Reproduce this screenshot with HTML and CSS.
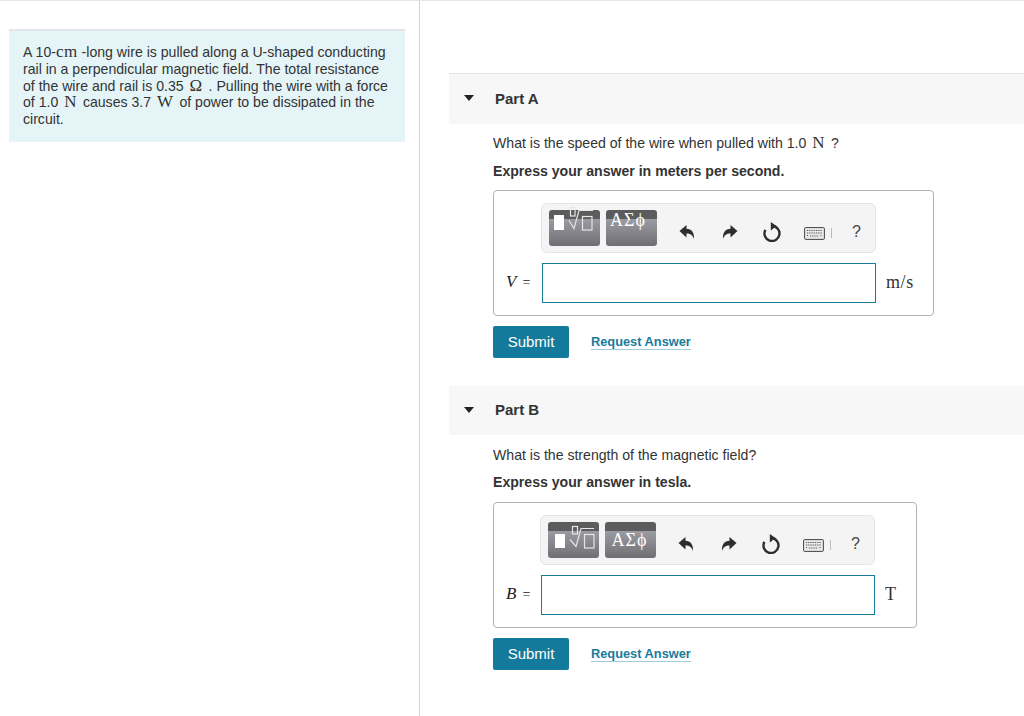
FILE: index.html
```html
<!DOCTYPE html>
<html lang="en">
<head>
  <meta charset="UTF-8">
  <title>Wire on a U-shaped rail</title>
  <link rel="stylesheet" href="styles.css">
</head>
<body>
  <svg class="defs" width="0" height="0">
    <symbol id="undo" viewBox="0 0 16 16"><path d="M0.500 7 L7.500 1 V4.800 C12.500 5 15.500 8.500 15 15 C13.500 11 11.500 9.500 7.500 9.500 V13.500 Z"/></symbol>
    <symbol id="redo" viewBox="0 0 16 16"><path d="M15.500 7 L8.500 1 V4.800 C3.500 5 0.500 8.500 1 15 C2.500 11 4.500 9.500 8.500 9.500 V13.500 Z"/></symbol>
    <symbol id="reset" viewBox="0 0 19 20"><path class="ring" d="M10 4 A7.500 7.500 0 1 1 3.400 7.900"/><path d="M8.800 0 L14.500 4 L8.800 8.400 Z"/></symbol>
    <symbol id="keyboard" viewBox="0 0 21 13">
      <rect class="kb" x="0.600" y="0.600" width="19.800" height="11.800" rx="1"/>
      <path class="keys" d="M3 3.500H18M3 6H18M3 8.500H4.500M6 9H15M16.500 8.500H18"/>
    </symbol>
  </svg>

  <div class="page">
    <div class="left">
      <div class="intro">
        A 10-<span class="math">cm</span> -long wire is pulled along a U-shaped conducting rail in a perpendicular magnetic field. The total resistance of the wire and rail is 0.35 <span class="math sp">Ω</span> . Pulling the wire with a force of 1.0 <span class="math sp">N</span> causes 3.7 <span class="math sp">W</span> of power to be dissipated in the circuit.
      </div>
    </div>

    <div class="right">
      <div class="part part-a">
        <div class="part-head"><span class="arrow"></span><span class="part-title">Part A</span></div>
        <div class="part-body">
          <p class="q">What is the speed of the wire when pulled with 1.0 <span class="math sp">N</span> ?</p>
          <p class="express">Express your answer in meters per second.</p>
          <div class="answer-box box-a">
            <div class="toolbar-row">
              <div class="toolbar">
                <div class="tool-btn tpl">
                  <svg class="tpl-icon" viewBox="0 0 52 36">
                    <rect class="solid" x="5" y="5" width="10" height="15"/>
                    <rect class="thin" x="21.500" y="-2.500" width="4.500" height="8.500"/>
                    <path class="thin" d="M20 10.500 L25 18.500 L30 0.500 H44"/>
                    <rect class="thin" x="33.500" y="6.500" width="9.500" height="13.500"/>
                  </svg>
                </div>
                <div class="tool-btn sym">ΑΣϕ</div>
                <svg class="ico undo"><use href="#undo"/></svg>
                <svg class="ico redo"><use href="#redo"/></svg>
                <svg class="ico reset"><use href="#reset"/></svg>
                <svg class="ico keyb"><use href="#keyboard"/></svg>
                <span class="sep"></span>
                <span class="help">?</span>
              </div>
            </div>
            <div class="input-row">
              <span class="var"><i>V</i><span class="eq">=</span></span>
              <div class="input"></div>
              <span class="unit">m/s</span>
            </div>
          </div>
          <div class="actions">
            <button class="submit">Submit</button>
            <a class="req" href="#">Request Answer</a>
          </div>
        </div>
      </div>

      <div class="part part-b">
        <div class="part-head"><span class="arrow"></span><span class="part-title">Part B</span></div>
        <div class="part-body">
          <p class="q">What is the strength of the magnetic field?</p>
          <p class="express">Express your answer in tesla.</p>
          <div class="answer-box box-b">
            <div class="toolbar-row">
              <div class="toolbar">
                <div class="tool-btn tpl">
                  <svg class="tpl-icon" viewBox="0 0 52 36">
                    <rect class="solid" x="7" y="12" width="10" height="14"/>
                    <rect class="thin" x="24.500" y="4.500" width="5" height="7.500"/>
                    <path class="thin" d="M22 17.500 L28 24.500 L33 6.500 H46"/>
                    <rect class="thin" x="36.500" y="12.500" width="9.500" height="13.500"/>
                  </svg>
                </div>
                <div class="tool-btn sym">ΑΣϕ</div>
                <svg class="ico undo"><use href="#undo"/></svg>
                <svg class="ico redo"><use href="#redo"/></svg>
                <svg class="ico reset"><use href="#reset"/></svg>
                <svg class="ico keyb"><use href="#keyboard"/></svg>
                <span class="sep"></span>
                <span class="help">?</span>
              </div>
            </div>
            <div class="input-row">
              <span class="var"><i>B</i><span class="eq">=</span></span>
              <div class="input"></div>
              <span class="unit">T</span>
            </div>
          </div>
          <div class="actions">
            <button class="submit">Submit</button>
            <a class="req" href="#">Request Answer</a>
          </div>
        </div>
      </div>
    </div>
  </div>
</body>
</html>
```

FILE: styles.css
```css
html, body { margin: 0; padding: 0; }
body {
  font-family: "Liberation Sans", Arial, sans-serif;
  font-size: 14.1px;
  color: #333;
  background: #fff;
  height: 716px;
  overflow: hidden;
}
.defs { position: absolute; }
.page {
  display: flex;
  height: 715px;
  border-top: 1px solid #e6e6e6;
}
.left {
  width: 420px;
  box-sizing: border-box;
  border-right: 1px solid #d0d4da;
  padding: 28px 14px 0 9px;
  flex-shrink: 0;
}
.intro {
  background: #e5f5f7;
  border-top: 2px solid #e3e6e8;
  padding: 13.4px 14px 0 14px;
  line-height: 16.6px;
  height: 97.6px;
}
.math {
  font-family: "Liberation Serif", serif;
  font-size: 17px;
  line-height: 0;
  letter-spacing: 0.5px;
}
.sp { margin: 0 2px; }
.right { flex: 1; padding: 72px 0 0 29px; min-width: 0; }
.part-head {
  display: flex;
  align-items: center;
  background: #f7f7f7;
  border-top: 1px solid #e4e4e4;
  padding-bottom: 2px;
  height: 48px;
}
.part-b { margin-top: 28px; }
.part-b .part-head { height: 47px; border-top: 0; }
.part-b .part-body { padding-top: 12px; }
.arrow {
  width: 0;
  height: 0;
  margin-left: 15px;
  border-left: 5px solid transparent;
  border-right: 5px solid transparent;
  border-top: 6px solid #222;
}
.part-title { margin-left: 21px; font-size: 15px; font-weight: bold; color: #333; }
.part-body { padding: 11px 0 0 44px; }
.q { margin: 0; line-height: 17px; }
.express { margin: 11px 0 0; line-height: 17px; font-weight: bold; }
.part-b .express { margin-top: 10px; }
.answer-box {
  box-sizing: border-box;
  margin-top: 10px;
  height: 126px;
  border: 1px solid #b2b2b2;
  border-radius: 4px;
  padding-top: 12px;
}
.box-a { width: 441px; }
.box-b { width: 424px; margin-top: 11px; }
.toolbar-row { padding-left: 47px; }
.box-b .toolbar-row { padding-left: 46px; }
.toolbar {
  display: flex;
  align-items: center;
  box-sizing: border-box;
  width: 335px;
  height: 50px;
  background: #f4f4f4;
  border: 1px solid #e4e4e4;
  border-radius: 6px;
  padding-left: 7px;
}
.tool-btn {
  box-sizing: border-box;
  height: 36px;
  border-radius: 3px;
  background: linear-gradient(#5c5c5e 0 26%, #9a9aa2 26%, #6f6f73 100%);
  color: #fff;
  flex-shrink: 0;
}
.tpl { width: 51px; margin-right: 6px; }
.tpl-icon { width: 52px; height: 36px; display: block; overflow: visible; }
.sym {
  width: 51px;
  padding-right: 7px;
  font-family: "Liberation Serif", serif;
  font-size: 18px;
  line-height: 20px;
  text-align: center;
  letter-spacing: 1px;
}
.box-b .sym { line-height: 36px; padding-right: 2px; }
.solid { fill: #fff; }
.thin { fill: none; stroke: #e6e6e6; stroke-width: 1.2; }
.ico { display: block; fill: #2e2e2e; margin-top: 8px; flex-shrink: 0; }
.undo { width: 16px; height: 16px; margin-left: 22px; }
.redo { width: 16px; height: 16px; margin-left: 27px; }
.reset { width: 19px; height: 20px; margin-left: 24px; }
.ring { fill: none; stroke: #2e2e2e; stroke-width: 2.4; }
.keyb { width: 21px; height: 13px; margin-left: 23px; margin-top: 10px; }
.kb { fill: #e8e8e8; stroke: #444; stroke-width: 1; }
.keys { fill: none; stroke: #555; stroke-width: 1; stroke-dasharray: 1 0.8; }
.sep { width: 1px; height: 10px; background: #bbb; margin: 10px 0 0 6px; }
.help { margin: 7px 0 0 20px; font-size: 16px; color: #444; }
.input-row { display: flex; align-items: center; margin-top: 10px; }
.var {
  width: 48px;
  box-sizing: border-box;
  padding: 0 0 2px 12px;
  font-family: "Liberation Serif", serif;
  font-size: 17px;
  color: #222;
  white-space: nowrap;
}
.box-b .var { width: 47px; }
.eq { font-size: 14px; margin-left: 6px; }
.input {
  box-sizing: border-box;
  width: 334px;
  height: 40px;
  border: 1px solid #1a7a99;
  background: #fff;
}
.unit {
  margin-left: 10px;
  padding-bottom: 2px;
  font-family: "Liberation Serif", serif;
  font-size: 18px;
  letter-spacing: 0.6px;
  color: #333;
}
.actions { display: flex; align-items: center; margin-top: 10px; }
.submit {
  width: 76px;
  height: 32px;
  padding: 0 0 2px;
  background: #147a9c;
  color: #fff;
  border: none;
  border-radius: 2px;
  font: 15px "Liberation Sans", Arial, sans-serif;
}
.req {
  margin-left: 22px;
  font-size: 12.8px;
  font-weight: bold;
  color: #1c7a9b;
  text-decoration: none;
  border-bottom: 1px solid #9ccbd9;
  line-height: 14px;
}
```
